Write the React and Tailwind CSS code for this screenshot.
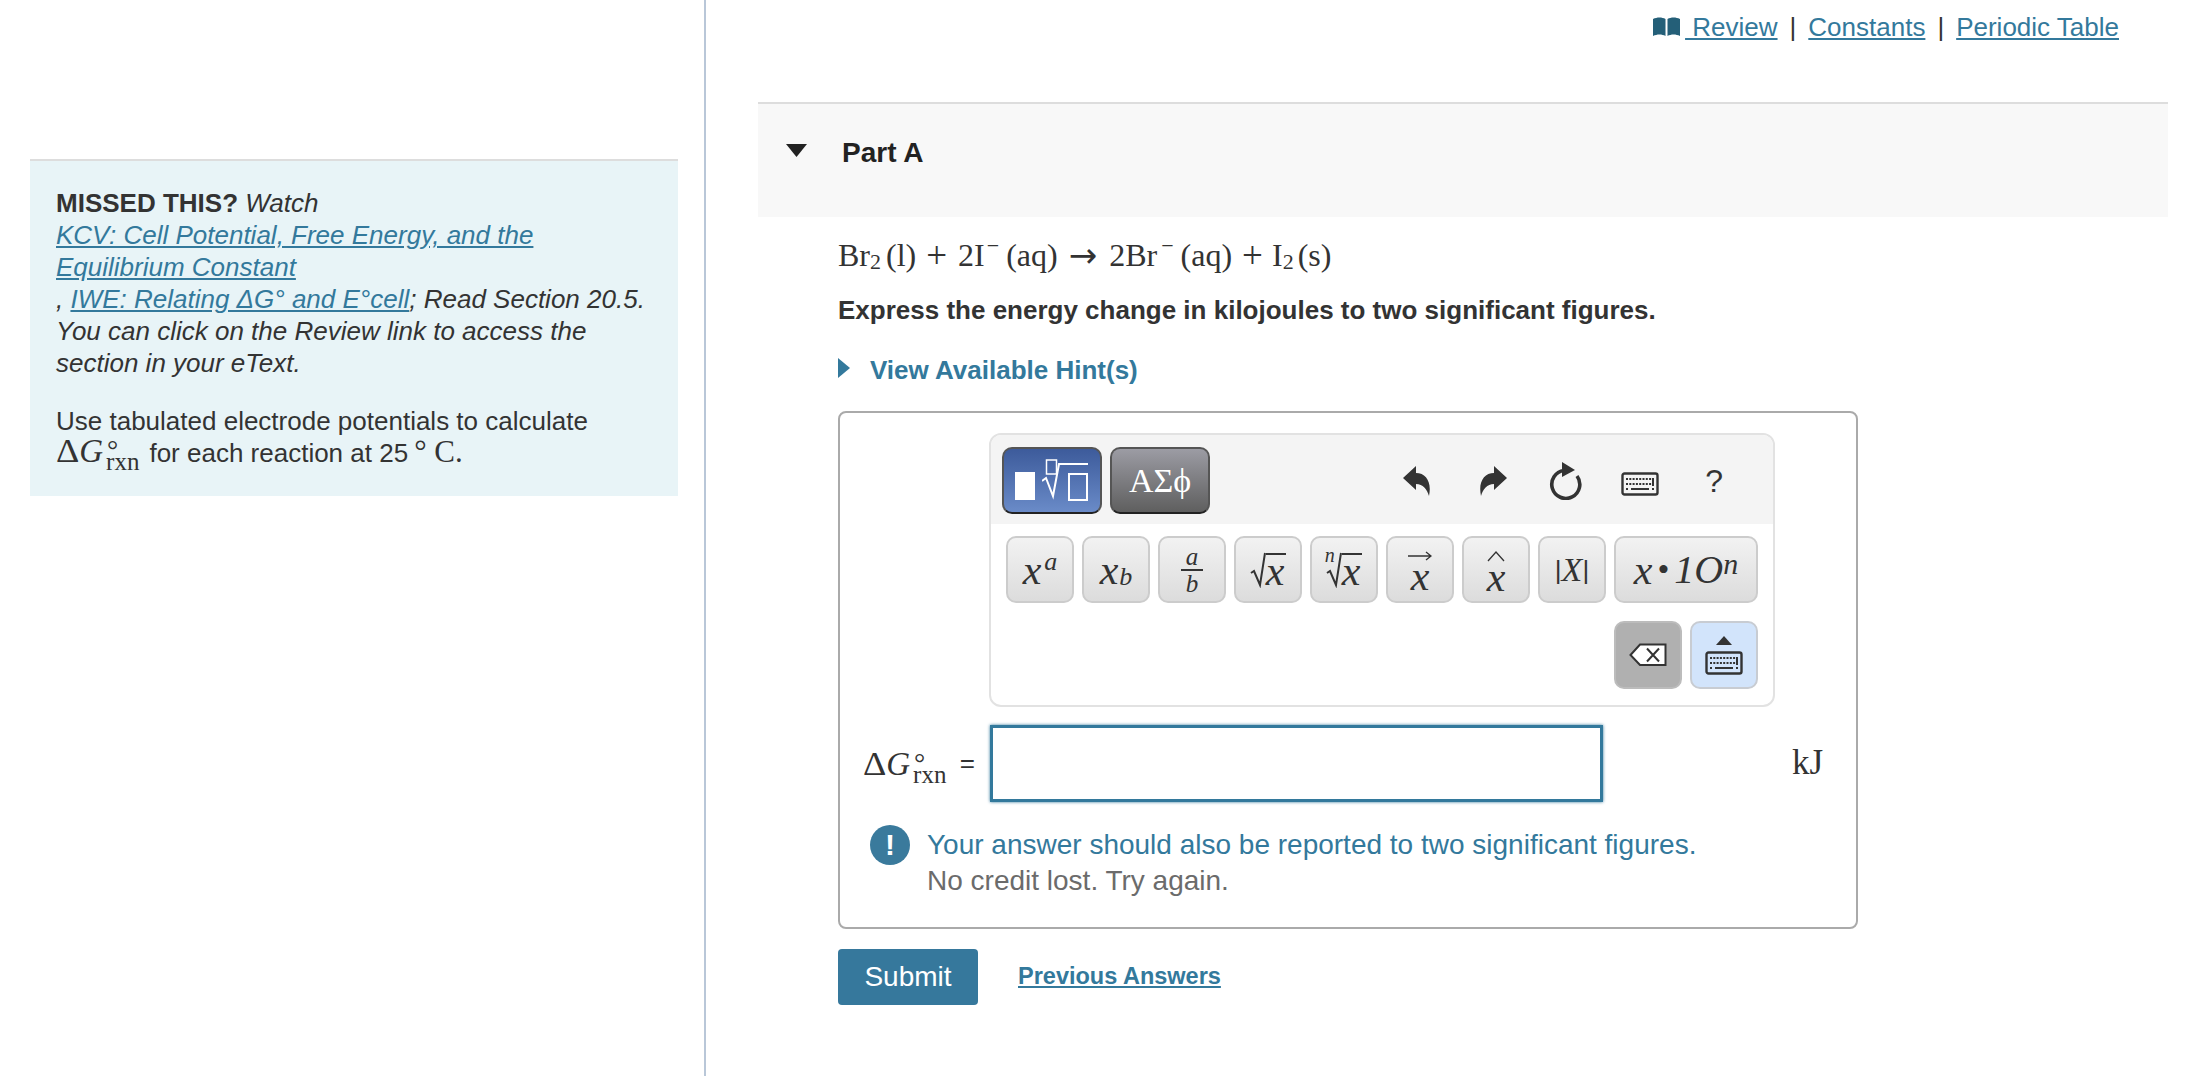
const Sans = "font-['Liberation_Sans',Arial,sans-serif]";
const Serif = "font-['Liberation_Serif','Times_New_Roman',serif]";

function KeyboardIcon({ width = 38, height = 24 }) {
  const rows = [
    [5, 6, 8],
    [5, 11, 8],
  ];
  return (
    <svg width={width} height={height} viewBox="0 0 38 24">
      <rect x="1.5" y="1.5" width="35" height="21" rx="2" fill="none" stroke="#333" strokeWidth="2.4" />
      {rows.map(([x, y, n]) =>
        Array.from({ length: n }).map((_, i) => (
          <rect key={`${y}-${i}`} x={x + i * 3.3} y={y} width="2" height="2" fill="#333" />
        ))
      )}
      <rect x="5" y="16" width="2" height="2" fill="#333" />
      <rect x="10" y="16" width="18" height="2" fill="#333" />
      <rect x="31" y="16" width="2" height="2" fill="#333" />
      <rect x="31" y="6" width="2" height="8" fill="#333" />
    </svg>
  );
}

function Grxn() {
  return (
    <span className={`inline-flex items-end ${Serif} text-[33px] leading-[36px] text-[#333]`}>
      <span className="scale-x-110 origin-left mr-[2px]">Δ</span>
      <span className="italic pr-[3px]">G</span>
      <span className="inline-flex flex-col items-start mb-[-3px]">
        <span className="block h-[13px] ml-[1px] text-[28px] leading-[22px]">°</span>
        <span className="block text-[25px] leading-[20px]">rxn</span>
      </span>
    </span>
  );
}

function Key({ children, wide }) {
  return (
    <div
      className={`${wide ? "w-[144px]" : "w-[68px]"} h-[67px] shrink-0 rounded-[10px] border-2 border-[#cccccc] bg-gradient-to-b from-[#f2f2f2] to-[#dcdcdc] flex items-center justify-center ${Serif} italic text-[#333] text-[42px] leading-none`}
    >
      {children}
    </div>
  );
}

function Radical({ index }) {
  return (
    <span className="flex items-center relative">
      {index && <span className="absolute left-[-1px] top-[-7px] text-[20px]">n</span>}
      <svg width="16" height="36" viewBox="0 0 16 36" className="shrink-0">
        <path d="M1 21 L4 19 L10 33 L15 1" fill="none" stroke="#333" strokeWidth="2" />
      </svg>
      <span className="border-t-2 border-[#333] pr-[2px] text-[42px] leading-[32px]">x</span>
    </span>
  );
}

function Toolbar() {
  return (
    <div className="ml-[149px] w-[786px] h-[274px] rounded-[12px] border-2 border-[#e2e2e2] overflow-hidden">
      <div className="h-[89px] bg-[#f4f4f4] flex items-start pt-[12px] pl-[11px]">
        <div className="w-[100px] h-[67px] rounded-[10px] border-2 border-[#555] border-b-[#222] bg-gradient-to-b from-[#3d5b9b] to-[#6a8bc8] flex items-center justify-center gap-[7px]">
          <span className="w-[20px] h-[28px] mt-[10px] bg-white" />
          <svg width="48" height="44" viewBox="0 0 48 44">
            <rect x="4.5" y="1" width="10" height="14" fill="none" stroke="#fff" strokeWidth="1.5" />
            <path d="M0 22 L4 19 L11 37 L17 5 H46" fill="none" stroke="#fff" strokeWidth="2" />
            <rect x="27" y="15" width="18" height="26" fill="none" stroke="#fff" strokeWidth="2" />
          </svg>
        </div>
        <div className={`ml-[8px] w-[100px] h-[67px] rounded-[10px] border-2 border-[#555] border-b-[#222] bg-gradient-to-b from-[#9c9ca4] to-[#5f5f5f] flex items-center justify-center ${Serif} text-white text-[34px] leading-none`}>
          ΑΣϕ
        </div>
        <div className="ml-auto flex items-center h-[67px] pr-[50px] text-[#333]">
          <svg width="28" height="32" viewBox="0 0 28 32">
            <path d="M0 13 L13 1 V8 C23 8 29 17 26 31 C24 24 20 19 13 19 V25 Z" fill="#333" />
          </svg>
          <svg width="28" height="32" viewBox="0 0 28 32" className="ml-[48px]">
            <path d="M28 13 L15 1 V8 C5 8 -1 17 2 31 C4 24 8 19 15 19 V25 Z" fill="#333" />
          </svg>
          <svg width="34" height="38" viewBox="0 0 34 38" className="ml-[42px]">
            <path d="M15 8.5 A14 14 0 1 0 28 14" fill="none" stroke="#333" strokeWidth="3.6" />
            <path d="M13 0 L26 8 L13 15 Z" fill="#333" />
          </svg>
          <span className="ml-[38px] mt-[7px]"><KeyboardIcon /></span>
          <span className={`ml-[46px] ${Sans} text-[32px] leading-none`}>?</span>
        </div>
      </div>
      <div className="bg-white pl-[15px] pt-[12px]">
        <div className="flex gap-[8px]">
          <Key>
            <span>x</span>
            <span className="text-[26px] mb-[16px] ml-[3px]">a</span>
          </Key>
          <Key>
            <span>x</span>
            <span className="text-[26px] mt-[14px] ml-[1px]">b</span>
          </Key>
          <Key>
            <span className="flex flex-col items-center text-[25px] leading-[25px]">
              <span className="border-b-2 border-[#333] px-[5px]">a</span>
              <span>b</span>
            </span>
          </Key>
          <Key>
            <Radical />
          </Key>
          <Key>
            <Radical index />
          </Key>
          <Key>
            <span className="flex flex-col items-center">
              <svg width="24" height="10" viewBox="0 0 24 10">
                <path d="M0 5 H23 M18 1 L23 5 L18 9" fill="none" stroke="#333" strokeWidth="1.3" />
              </svg>
              <span className="leading-[26px] mt-[2px]">x</span>
            </span>
          </Key>
          <Key>
            <span className="flex flex-col items-center">
              <svg width="18" height="12" viewBox="0 0 18 12">
                <path d="M1 11 L9 2 L17 11" fill="none" stroke="#333" strokeWidth="1.3" />
              </svg>
              <span className="leading-[26px] mt-[2px]">x</span>
            </span>
          </Key>
          <Key>
            <span className={`${Sans} text-[26px] not-italic`}>|</span>
            <span className="text-[34px]">X</span>
            <span className={`${Sans} text-[26px] not-italic`}>|</span>
          </Key>
          <Key wide>
            <span>x</span>
            <span className="mx-[5px] text-[34px] not-italic">•</span>
            <span className="text-[40px]">1O</span>
            <span className="text-[30px] mb-[12px]">n</span>
          </Key>
        </div>
        <div className="flex justify-end gap-[8px] pr-[15px] mt-[18px]">
          <div className="w-[68px] h-[68px] rounded-[10px] border-2 border-[#bcbcbc] bg-[#b0b0b0] flex items-center justify-center">
            <svg width="38" height="24" viewBox="0 0 38 24">
              <path d="M1.5 12 L11 1.5 H36.5 V22 H11 Z" fill="#fff" stroke="#333" strokeWidth="2" />
              <path d="M18 5.5 L30 18.5 M30 5.5 L18 18.5" stroke="#333" strokeWidth="2" />
            </svg>
          </div>
          <div className="w-[68px] h-[68px] rounded-[10px] border-2 border-[#c8ccd2] bg-[#d2e4fb] flex flex-col items-center justify-center gap-[6px]">
            <svg width="16" height="9" viewBox="0 0 16 9">
              <path d="M8 0 L16 9 H0 Z" fill="#333" />
            </svg>
            <KeyboardIcon height={24} />
          </div>
        </div>
      </div>
    </div>
  );
}

export default function App() {
  return (
    <div className={`flex h-screen w-full overflow-hidden bg-white text-[#333] ${Sans}`}>
      <div className="w-[706px] shrink-0 border-r-2 border-[#b9c7d8] pt-[159px] pl-[30px]">
        <div className="w-[648px] h-[337px] border-t-2 border-[#dddddd] bg-[#e8f4f7] pl-[26px] pt-[26px] text-[26px] leading-[32px]">
          <p>
            <b>MISSED THIS?</b> <i>Watch</i>
            <br />
            <a className="italic underline text-[#33799c]">KCV: Cell Potential, Free Energy, and the</a>
            <br />
            <a className="italic underline text-[#33799c]">Equilibrium Constant</a>
            <br />
            <i>
              , <a className="underline text-[#33799c]">IWE: Relating ΔG° and E°cell</a>; Read Section 20.5.
              <br />
              You can click on the Review link to access the
              <br />
              section in your eText.
            </i>
          </p>
          <p className="mt-[26px]">Use tabulated electrode potentials to calculate</p>
          <p className="flex items-end h-[32px]">
            <Grxn />
            <span className="ml-[10px]">for each reaction at 25</span>
            <span className={`ml-[6px] ${Serif} text-[31px] leading-[34px]`}>° C.</span>
          </p>
        </div>
      </div>

      <div className="flex-1 pl-[52px]">
        <div className="h-[102px] pr-[49px] pt-[11px] flex justify-end items-start text-[26px] leading-[32px] text-[#33799c] mr-[22px]">
          <svg width="27" height="20" viewBox="0 0 27 20" className="mt-[6px]">
            <path d="M0 2 C4 0 9 0 12.5 2 V19 C9 17 4 17 0 19 Z" fill="#245f78" />
            <path d="M27 2 C23 0 18 0 14.5 2 V19 C18 17 23 17 27 19 Z" fill="#245f78" />
          </svg>
          <a className="underline ml-[5px]">&nbsp;Review</a>
          <span className="mx-[12px] text-[#333]">|</span>
          <a className="underline">Constants</a>
          <span className="mx-[12px] text-[#333]">|</span>
          <a className="underline">Periodic Table</a>
        </div>

        <div className="w-[1410px] h-[115px] border-t-2 border-[#dddddd] bg-[#f8f8f8] flex items-start pt-[33px] pl-[28px]">
          <svg width="21" height="13" viewBox="0 0 21 13" className="mt-[7px]">
            <path d="M0 0 H21 L10.5 13 Z" fill="#222" />
          </svg>
          <h2 className="ml-[35px] text-[28px] leading-[32px] font-bold text-[#222]">Part A</h2>
        </div>

        <div className="pl-[80px] w-[1100px]">
          <div className={`mt-[18px] h-[40px] flex items-center ${Serif} text-[32px] leading-none text-[#333]`}>
            <span>Br</span>
            <span className="text-[22px] self-end mb-[2px]">2</span>
            <span className="ml-[5px]">(l)</span>
            <span className="ml-[10px] text-[37px]">+</span>
            <span className="ml-[11px]">2I</span>
            <span className="ml-[2px] text-[22px] self-start">−</span>
            <span className="ml-[7px]">(aq)</span>
            <span className="ml-[11px] font-['DejaVu_Sans',sans-serif] text-[34px]">→</span>
            <span className="ml-[12px]">2Br</span>
            <span className="ml-[4px] text-[22px] self-start">−</span>
            <span className="ml-[7px]">(aq)</span>
            <span className="ml-[10px] text-[37px]">+</span>
            <span className="ml-[9px]">I</span>
            <span className="text-[22px] self-end mb-[2px]">2</span>
            <span className="ml-[4px]">(s)</span>
          </div>
          <p className="mt-[19px] text-[26px] leading-[32px] font-bold">Express the energy change in kilojoules to two significant figures.</p>
          <div className="mt-[28px] flex items-center h-[32px] text-[#33799c] font-bold text-[26px]">
            <svg width="12" height="20" viewBox="0 0 12 20" className="mb-[4px]">
              <path d="M0 0 L12 10 L0 20 Z" fill="#33799c" />
            </svg>
            <span className="ml-[20px]">View Available Hint(s)</span>
          </div>

          <div className="mt-[25px] w-[1020px] h-[518px] rounded-[8px] border-2 border-[#aaaaaa] pt-[20px]">
            <Toolbar />
            <div className="mt-[18px] flex items-center h-[77px] pr-[33px]">
              <div className="w-[150px] shrink-0 flex items-center pl-[23px]">
                <Grxn />
                <span className="ml-auto mr-[15px] text-[26px]">=</span>
              </div>
              <div className="w-[613px] h-[77px] border-[3px] border-[#33799c] shadow-[0_0_3px_#33799c] bg-white" />
              <span className={`ml-auto ${Serif} text-[35px] text-[#333]`}>kJ</span>
            </div>
            <div className="mt-[25px] pl-[30px] flex items-start">
              <div className="w-[40px] h-[40px] -mt-[2px] rounded-full bg-[#3a7a9c] flex items-center justify-center text-white font-bold text-[30px] leading-none">!</div>
              <div className="ml-[17px] text-[28px] leading-[36px]">
                <p className="text-[#33799c]">Your answer should also be reported to two significant figures.</p>
                <p className="text-[#6b6b6b]">No credit lost. Try again.</p>
              </div>
            </div>
          </div>

          <div className="mt-[20px] flex items-center">
            <div className="w-[140px] h-[56px] rounded-[4px] bg-[#36789c] text-white text-[28px] flex items-center justify-center">Submit</div>
            <a className="ml-[40px] text-[#33799c] font-bold underline text-[23.5px]">Previous Answers</a>
          </div>
        </div>
      </div>
    </div>
  );
}
